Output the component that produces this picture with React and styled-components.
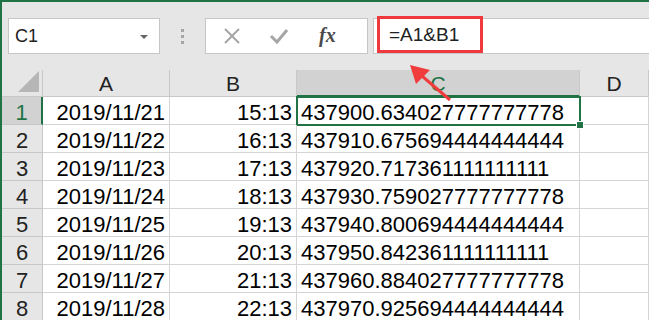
import React from 'react';
import styled, { createGlobalStyle } from 'styled-components';

const GREEN = '#217346';

const GlobalStyle = createGlobalStyle`
  html, body { margin: 0; padding: 0; background: #fff; }
  body { font-family: "Liberation Sans", Arial, sans-serif; }
`;

// Данные таблицы
const rows = [
  ['2019/11/21', '15:13', '437900.634027777777778'],
  ['2019/11/22', '16:13', '437910.675694444444444'],
  ['2019/11/23', '17:13', '437920.717361111111111'],
  ['2019/11/24', '18:13', '437930.759027777777778'],
  ['2019/11/25', '19:13', '437940.800694444444444'],
  ['2019/11/26', '20:13', '437950.842361111111111'],
  ['2019/11/27', '21:13', '437960.884027777777778'],
  ['2019/11/28', '22:13', '437970.925694444444444'],
];

const Frame = styled.div`
  position: relative;
  height: 320px;
  overflow: hidden;
  background: #e6e6e6;
  border-top: 2px solid ${GREEN};
  border-left: 2px solid ${GREEN};
  box-sizing: border-box;
`;

const Toolbar = styled.div`
  height: 68px;
  display: flex;
  align-items: flex-start;
  padding: 16px 0 0 6px;
  box-sizing: border-box;
`;

const NameBox = styled.div`
  width: 152px;
  height: 36px;
  box-sizing: border-box;
  background: #fff;
  border: 1px solid #c6c6c6;
  display: flex;
  align-items: center;
  justify-content: space-between;
  padding: 0 11px 0 6px;
  font-size: 18px;
  color: #222;
`;

const Caret = styled.span`
  width: 0;
  height: 0;
  border-left: 4px solid transparent;
  border-right: 4px solid transparent;
  border-top: 4px solid #666;
  margin-top: 1px;
`;

const Dots = styled.div`
  width: 45px;
  height: 36px;
  display: flex;
  flex-direction: column;
  align-items: center;
  justify-content: center;
  gap: 3px;
  span {
    width: 3px;
    height: 3px;
    background: #a6a6a6;
  }
`;

const ButtonBox = styled.div`
  width: 163px;
  height: 36px;
  box-sizing: border-box;
  background: #fff;
  border: 1px solid #c6c6c6;
  display: flex;
  align-items: center;
  padding-left: 17px;
  gap: 28px;
`;

const Fx = styled.span`
  font-family: "Liberation Serif", "Times New Roman", serif;
  font-style: italic;
  font-weight: bold;
  font-size: 20px;
  color: #4a4a4a;
  margin-left: 2px;
  margin-top: -2px;
`;

const FormulaBox = styled.div`
  flex: 1;
  height: 36px;
  margin-left: 5px;
  box-sizing: border-box;
  background: #fff;
  border: 1px solid #c6c6c6;
  border-right: none;
  padding-left: 3px;
`;

const Highlight = styled.div`
  width: 106px;
  height: 37px;
  margin-top: -3px;
  box-sizing: border-box;
  border: 3px solid #ee3a3c;
  display: flex;
  align-items: center;
  padding: 0 0 0 9px;
  font-size: 19px;
  color: #222;
`;

const Sheet = styled.div`
  display: grid;
  grid-template-columns: 41px 127px 127px 283px 1fr;
  grid-template-rows: 27px repeat(8, 28px);
  background: #fff;
`;

const Head = styled.div`
  box-sizing: border-box;
  background: ${(p) => (p.$active ? '#d2d2d2' : '#e6e6e6')};
  color: ${(p) => (p.$active ? GREEN : '#222')};
  border-right: ${(p) => (p.$rowActive ? `2px solid ${GREEN}` : '1px solid #c8c8c8')};
  border-bottom: ${(p) => (p.$colActive ? `2px solid ${GREEN}` : '1px solid #c8c8c8')};
  font-size: ${(p) => (p.$row ? '22px' : '21px')};
  line-height: 22px;
  padding-top: ${(p) => (p.$row ? '5px' : '3px')};
  text-align: center;
`;

const Corner = styled.div`
  box-sizing: border-box;
  background: #e6e6e6;
  border-right: 1px solid #c8c8c8;
  border-bottom: 1px solid #c8c8c8;
  display: flex;
  justify-content: flex-end;
  align-items: flex-end;
  padding: 0 3px 4px 0;
`;

const Cell = styled.div`
  position: relative;
  box-sizing: border-box;
  border-right: 1px solid #d4d4d4;
  border-bottom: 1px solid #d4d4d4;
  font-size: 22px;
  line-height: 22px;
  padding: 5px 4px 0 4px;
  color: #000;
  white-space: nowrap;
  text-align: ${(p) => p.$align || 'left'};

  ${(p) =>
    p.$selected &&
    `
    &::after {
      content: '';
      position: absolute;
      left: -1px;
      top: -1px;
      right: -2px;
      bottom: -2px;
      border: 2px solid ${GREEN};
    }
    &::before {
      content: '';
      position: absolute;
      right: -5px;
      bottom: -5px;
      width: 6px;
      height: 6px;
      background: ${GREEN};
      border: 1px solid #fff;
      z-index: 2;
    }
  `}
`;

const Arrow = styled.svg`
  position: absolute;
  left: 400px;
  top: 58px;
  pointer-events: none;
`;

const App = () => {
  return (
    <>
      <GlobalStyle />
      <Frame>
        <Toolbar>
          <NameBox>
            <span>C1</span>
            <Caret />
          </NameBox>
          <Dots>
            <span />
            <span />
            <span />
          </Dots>
          <ButtonBox>
            <svg width="18" height="18" viewBox="0 0 18 18">
              <path d="M2 2 L16 16 M16 2 L2 16" stroke="#a6a6a6" strokeWidth="2" />
            </svg>
            <svg width="20" height="18" viewBox="0 0 20 18">
              <path d="M2 9 L8 15 L18 3" stroke="#a6a6a6" strokeWidth="3" fill="none" />
            </svg>
            <Fx>fx</Fx>
          </ButtonBox>
          <FormulaBox>
            <Highlight>=A1&amp;B1</Highlight>
          </FormulaBox>
        </Toolbar>
        <Sheet>
          <Corner>
            <svg width="21" height="21" viewBox="0 0 21 21">
              <path d="M21 0 L21 21 L0 21 Z" fill="#b6b6b6" />
            </svg>
          </Corner>
          <Head>A</Head>
          <Head>B</Head>
          <Head $active $colActive>C</Head>
          <Head>D</Head>
          {rows.map((r, i) => (
            <React.Fragment key={i}>
              <Head $row $active={i === 0} $rowActive={i === 0}>
                {i + 1}
              </Head>
              <Cell $align="right">{r[0]}</Cell>
              <Cell $align="right">{r[1]}</Cell>
              <Cell $selected={i === 0}>{r[2]}</Cell>
              <Cell />
            </React.Fragment>
          ))}
        </Sheet>
        <Arrow width="60" height="50" viewBox="0 0 60 50">
          <path d="M48 40 L20 16" stroke="#f03c3c" strokeWidth="3" />
          <path d="M8 5 L28 10 L14 24 Z" fill="#f03c3c" />
        </Arrow>
      </Frame>
    </>
  );
};

export default App;
